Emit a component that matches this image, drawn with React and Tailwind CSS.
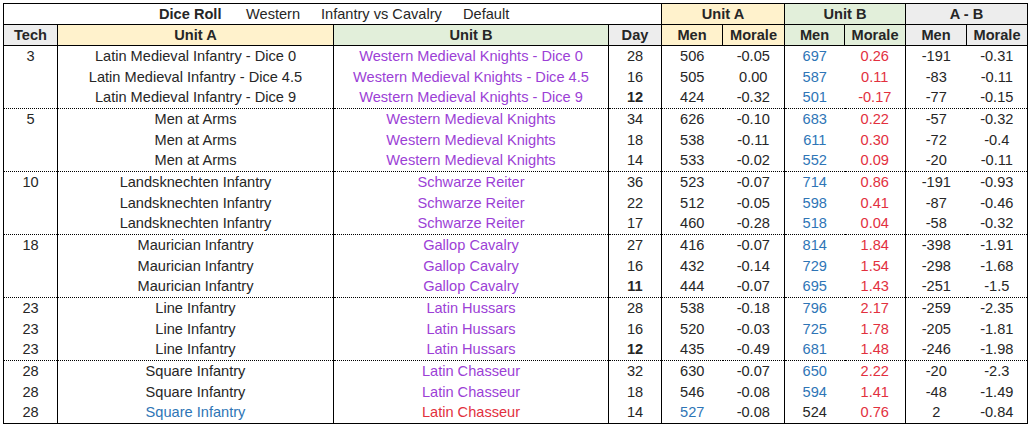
import React from 'react';

const BLUE = 'text-[#2e75b6]';
const RED = 'text-[#e2303e]';
const PURPLE = 'text-[#9c3fd6]';

const groups = [
  {
    tech: ['3', '', ''],
    a: ['Latin Medieval Infantry - Dice 0', 'Latin Medieval Infantry - Dice 4.5', 'Latin Medieval Infantry - Dice 9'],
    b: ['Western Medieval Knights - Dice 0', 'Western Medieval Knights - Dice 4.5', 'Western Medieval Knights - Dice 9'],
    day: ['28', '16', '12'], bold: 2,
    am: ['506', '505', '424'], amo: ['-0.05', '0.00', '-0.32'],
    bm: ['697', '587', '501'], bmo: ['0.26', '0.11', '-0.17'],
    dm: ['-191', '-83', '-77'], dmo: ['-0.31', '-0.11', '-0.15'],
  },
  {
    tech: ['5', '', ''],
    a: ['Men at Arms', 'Men at Arms', 'Men at Arms'],
    b: ['Western Medieval Knights', 'Western Medieval Knights', 'Western Medieval Knights'],
    day: ['34', '18', '14'], bold: -1,
    am: ['626', '538', '533'], amo: ['-0.10', '-0.11', '-0.02'],
    bm: ['683', '611', '552'], bmo: ['0.22', '0.30', '0.09'],
    dm: ['-57', '-72', '-20'], dmo: ['-0.32', '-0.4', '-0.11'],
  },
  {
    tech: ['10', '', ''],
    a: ['Landsknechten Infantry', 'Landsknechten Infantry', 'Landsknechten Infantry'],
    b: ['Schwarze Reiter', 'Schwarze Reiter', 'Schwarze Reiter'],
    day: ['36', '22', '17'], bold: -1,
    am: ['523', '512', '460'], amo: ['-0.07', '-0.05', '-0.28'],
    bm: ['714', '598', '518'], bmo: ['0.86', '0.41', '0.04'],
    dm: ['-191', '-87', '-58'], dmo: ['-0.93', '-0.46', '-0.32'],
  },
  {
    tech: ['18', '', ''],
    a: ['Maurician Infantry', 'Maurician Infantry', 'Maurician Infantry'],
    b: ['Gallop Cavalry', 'Gallop Cavalry', 'Gallop Cavalry'],
    day: ['27', '16', '11'], bold: 2,
    am: ['416', '432', '444'], amo: ['-0.07', '-0.14', '-0.07'],
    bm: ['814', '729', '695'], bmo: ['1.84', '1.54', '1.43'],
    dm: ['-398', '-298', '-251'], dmo: ['-1.91', '-1.68', '-1.5'],
  },
  {
    tech: ['23', '23', '23'],
    a: ['Line Infantry', 'Line Infantry', 'Line Infantry'],
    b: ['Latin Hussars', 'Latin Hussars', 'Latin Hussars'],
    day: ['28', '16', '12'], bold: 2,
    am: ['538', '520', '435'], amo: ['-0.18', '-0.03', '-0.49'],
    bm: ['796', '725', '681'], bmo: ['2.17', '1.78', '1.48'],
    dm: ['-259', '-205', '-246'], dmo: ['-2.35', '-1.81', '-1.98'],
  },
  {
    tech: ['28', '28', '28'],
    a: ['Square Infantry', 'Square Infantry', 'Square Infantry'],
    b: ['Latin Chasseur', 'Latin Chasseur', 'Latin Chasseur'],
    day: ['32', '18', '14'], bold: -1,
    am: ['630', '546', '527'], amo: ['-0.07', '-0.08', '-0.08'],
    bm: ['650', '594', '524'], bmo: ['2.22', '1.41', '0.76'],
    dm: ['-20', '-48', '2'], dmo: ['-2.3', '-1.49', '-0.84'],
    last: true,
  },
];

const widths = ['w-[54px]', 'w-[276px]', 'w-[275px]', 'w-[53px]', 'w-[61px]', 'w-[62px]', 'w-[60px]', 'w-[61px]', 'w-[61px]', 'w-[61px]'];

const hd = 'border border-black font-bold text-center p-0';

export default function App() {
  return (
    <div className="bg-white w-[1030px] h-[426px] pt-[3px] pl-[3px] text-[#262626] text-[14.6px] leading-none" style={{ fontFamily: '"Liberation Sans", Arial, sans-serif' }}>
      <table className="table-fixed border-collapse w-[1024px] border border-black">
        <colgroup>
          {widths.map((w, i) => <col key={i} className={w} />)}
        </colgroup>
        <thead>
          <tr className="h-[21px]">
            <td colSpan={4} className="border border-black p-0">
              <div className="flex items-center pl-[155px]">
                <span className="w-[87px] font-bold">Dice Roll</span>
                <span className="w-[75px]">Western</span>
                <span className="w-[142px]">Infantry vs Cavalry</span>
                <span>Default</span>
              </div>
            </td>
            <td colSpan={2} className={`${hd} bg-[#fff2cc]`}>Unit A</td>
            <td colSpan={2} className={`${hd} bg-[#e2efda]`}>Unit B</td>
            <td colSpan={2} className={`${hd} bg-[#ededed]`}>A - B</td>
          </tr>
          <tr className="h-[21px]">
            <td className={`${hd} bg-[#ededed]`}>Tech</td>
            <td className={`${hd} bg-[#fff2cc]`}>Unit A</td>
            <td className={`${hd} bg-[#e2efda]`}>Unit B</td>
            <td className={`${hd} bg-[#ededed]`}>Day</td>
            <td className={`${hd} bg-[#fff2cc]`}>Men</td>
            <td className={`${hd} bg-[#fff2cc]`}>Morale</td>
            <td className={`${hd} bg-[#e2efda]`}>Men</td>
            <td className={`${hd} bg-[#e2efda]`}>Morale</td>
            <td className={`${hd} bg-[#ededed]`}>Men</td>
            <td className={`${hd} bg-[#ededed]`}>Morale</td>
          </tr>
        </thead>
        <tbody>
          {groups.map((g, gi) =>
            [0, 1, 2].map((r) => {
              const lastRow = g.last && r === 2;
              const sep = r === 2 && !g.last ? 'border-b border-b-black [border-bottom-style:dotted]' : '';
              const c = 'p-0 text-center';
              const vr = 'border-r border-r-black';
              return (
                <tr key={`${gi}-${r}`} className="h-[21px]">
                  <td className={`${c} ${vr} ${sep}`}>{g.tech[r]}</td>
                  <td className={`${c} ${vr} ${sep} ${lastRow ? BLUE : ''}`}>{g.a[r]}</td>
                  <td className={`${c} ${vr} ${sep} ${lastRow ? RED : PURPLE}`}>{g.b[r]}</td>
                  <td className={`${c} ${vr} ${sep} ${g.bold === r ? 'font-bold' : ''}`}>{g.day[r]}</td>
                  <td className={`${c} ${sep} ${lastRow ? BLUE : ''}`}>{g.am[r]}</td>
                  <td className={`${c} ${vr} ${sep}`}>{g.amo[r]}</td>
                  <td className={`${c} ${sep} ${lastRow ? '' : BLUE}`}>{g.bm[r]}</td>
                  <td className={`${c} ${vr} ${sep} ${RED}`}>{g.bmo[r]}</td>
                  <td className={`${c} ${sep}`}>{g.dm[r]}</td>
                  <td className={`${c} ${vr} ${sep}`}>{g.dmo[r]}</td>
                </tr>
              );
            })
          )}
        </tbody>
      </table>
    </div>
  );
}
